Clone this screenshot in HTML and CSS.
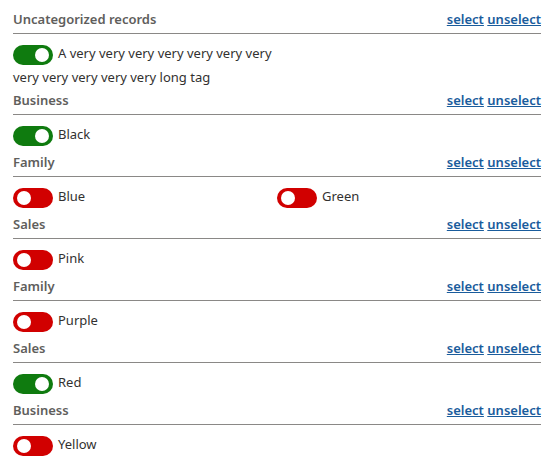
FILE: index.html
```html
<!DOCTYPE html>
<html lang="en">
<head>
<meta charset="utf-8">
<title>Tags</title>
<link rel="stylesheet" href="styles.css">
</head>
<body>
<div class="list">
  <section class="group">
    <div class="group-header">
      <span class="title">Uncategorized records</span>
      <span class="actions"><a href="#">select</a> <a href="#">unselect</a></span>
    </div>
    <div class="items">
      <div class="item"><span class="toggle on"><span class="thumb"></span></span><span class="label">A very very very very very very very very very very very very long tag</span></div>
    </div>
  </section>
  <section class="group">
    <div class="group-header">
      <span class="title">Business</span>
      <span class="actions"><a href="#">select</a> <a href="#">unselect</a></span>
    </div>
    <div class="items">
      <div class="item"><span class="toggle on"><span class="thumb"></span></span><span class="label">Black</span></div>
    </div>
  </section>
  <section class="group">
    <div class="group-header">
      <span class="title">Family</span>
      <span class="actions"><a href="#">select</a> <a href="#">unselect</a></span>
    </div>
    <div class="items">
      <div class="item"><span class="toggle off"><span class="thumb"></span></span><span class="label">Blue</span></div>
      <div class="item"><span class="toggle off"><span class="thumb"></span></span><span class="label">Green</span></div>
    </div>
  </section>
  <section class="group">
    <div class="group-header">
      <span class="title">Sales</span>
      <span class="actions"><a href="#">select</a> <a href="#">unselect</a></span>
    </div>
    <div class="items">
      <div class="item"><span class="toggle off"><span class="thumb"></span></span><span class="label">Pink</span></div>
    </div>
  </section>
  <section class="group">
    <div class="group-header">
      <span class="title">Family</span>
      <span class="actions"><a href="#">select</a> <a href="#">unselect</a></span>
    </div>
    <div class="items">
      <div class="item"><span class="toggle off"><span class="thumb"></span></span><span class="label">Purple</span></div>
    </div>
  </section>
  <section class="group">
    <div class="group-header">
      <span class="title">Sales</span>
      <span class="actions"><a href="#">select</a> <a href="#">unselect</a></span>
    </div>
    <div class="items">
      <div class="item"><span class="toggle on"><span class="thumb"></span></span><span class="label">Red</span></div>
    </div>
  </section>
  <section class="group">
    <div class="group-header">
      <span class="title">Business</span>
      <span class="actions"><a href="#">select</a> <a href="#">unselect</a></span>
    </div>
    <div class="items">
      <div class="item"><span class="toggle off"><span class="thumb"></span></span><span class="label">Yellow</span></div>
    </div>
  </section>
</div>
</body>
</html>
```
FILE: styles.css
```css
html, body {
  margin: 0;
  padding: 0;
  background: #ffffff;
}
body {
  font-family: "Noto Sans", "Open Sans", "Liberation Sans", sans-serif;
  font-size: 13px;
  color: #323130;
}
.list {
  padding: 9px 9px 0 13px;
}
.group-header {
  display: flex;
  justify-content: space-between;
  align-items: center;
  line-height: 20px;
  padding-bottom: 4px;
  border-bottom: 1px solid #8a8886;
}
.title {
  font-weight: 600;
  color: #605e5c;
}
.actions a {
  color: #1a5c9c;
  font-weight: 600;
  text-decoration: underline;
}
.items {
  display: grid;
  grid-template-columns: 1fr 1fr;
  padding: 8px 0 3px;
}
.item {
  line-height: 19px;
}
.toggle {
  display: inline-block;
  position: relative;
  width: 40px;
  height: 20px;
  border-radius: 10px;
  margin: 3px 5px 3px 0;
  vertical-align: middle;
}
.toggle.on { background: #0f7b0f; }
.toggle.off { background: #d10000; }
.thumb {
  position: absolute;
  top: 3px;
  width: 14px;
  height: 14px;
  border-radius: 50%;
  background: #ffffff;
}
.toggle.on .thumb { right: 4px; }
.toggle.off .thumb { left: 4px; }
```
